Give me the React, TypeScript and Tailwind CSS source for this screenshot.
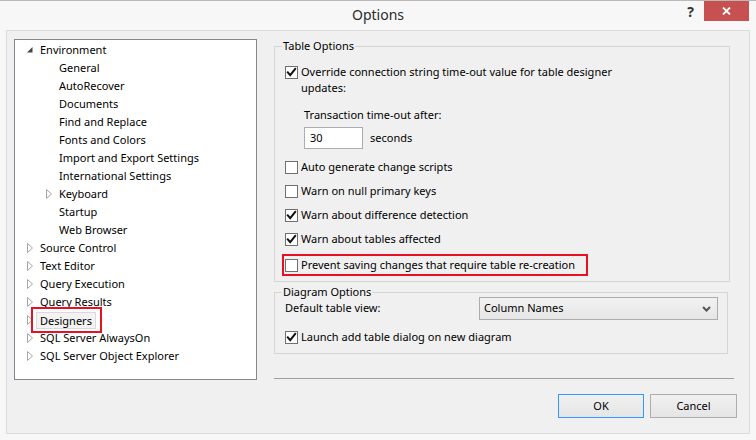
import React from "react";

function Check({ checked }: { checked: boolean }) {
  return (
    <span className="w-[13px] h-[13px] border border-[#707070] bg-white flex items-center justify-center shrink-0">
      {checked && (
        <svg width="11" height="11" viewBox="0 0 11 11">
          <path d="M1.8 5.4 L4.2 8.2 L9.2 2" stroke="#111" strokeWidth="2" fill="none" strokeLinecap="square" />
        </svg>
      )}
    </span>
  );
}

function CheckRow({ checked, label }: { checked: boolean; label: string }) {
  return (
    <div className="h-[24px] flex items-center gap-[3px]">
      <Check checked={checked} />
      <span>{label}</span>
    </div>
  );
}

function Collapsed() {
  return (
    <svg width="7" height="10" viewBox="0 0 7 10">
      <polygon points="0.5,0.5 5.5,5 0.5,9.5" fill="#fff" stroke="#a6a6a6" strokeWidth="1" />
    </svg>
  );
}

function Expanded() {
  return (
    <svg width="6" height="6" viewBox="0 0 6 6">
      <polygon points="5.5,0 5.5,5.5 0,5.5" fill="#454545" />
    </svg>
  );
}

type Item = { label: string; level: number; arrow: "none" | "exp" | "col"; selected?: boolean };

const items: Item[] = [
  { label: "Environment", level: 0, arrow: "exp" },
  { label: "General", level: 1, arrow: "none" },
  { label: "AutoRecover", level: 1, arrow: "none" },
  { label: "Documents", level: 1, arrow: "none" },
  { label: "Find and Replace", level: 1, arrow: "none" },
  { label: "Fonts and Colors", level: 1, arrow: "none" },
  { label: "Import and Export Settings", level: 1, arrow: "none" },
  { label: "International Settings", level: 1, arrow: "none" },
  { label: "Keyboard", level: 1, arrow: "col" },
  { label: "Startup", level: 1, arrow: "none" },
  { label: "Web Browser", level: 1, arrow: "none" },
  { label: "Source Control", level: 0, arrow: "col" },
  { label: "Text Editor", level: 0, arrow: "col" },
  { label: "Query Execution", level: 0, arrow: "col" },
  { label: "Query Results", level: 0, arrow: "col" },
  { label: "Designers", level: 0, arrow: "col", selected: true },
  { label: "SQL Server AlwaysOn", level: 0, arrow: "col" },
  { label: "SQL Server Object Explorer", level: 0, arrow: "col" },
];

export default function App() {
  return (
    <div className="w-[756px] h-[440px] bg-[#f7f7f7] border-t border-[#b9b9b9] text-[11px] text-black font-['Noto_Sans','DejaVu_Sans',sans-serif] overflow-hidden">
      {/* Title bar */}
      <div className="h-[29px] grid grid-cols-[1fr_auto_1fr]">
        <div />
        <div className="self-center text-[14px] text-[#2b2b2b] leading-[20px] -mt-[1px]">Options</div>
        <div className="flex justify-end items-start pr-[7px]">
          <div className="mt-[2px] mr-[10px] text-[14px] font-bold text-[#333] leading-[18px]">?</div>
          <div className="w-[45px] h-[20px] bg-[#c75050] flex items-center justify-center">
            <svg width="9" height="8" viewBox="0 0 9 8">
              <path d="M1 0.5 L8 7.5 M8 0.5 L1 7.5" stroke="#fff" strokeWidth="1.8" />
            </svg>
          </div>
        </div>
      </div>

      {/* Main panel */}
      <div className="mx-[6px] h-[404px] border border-[#dadada] bg-[#f0f0f0] flex pl-[7px] pt-[8px]">
        {/* Tree */}
        <div className="w-[243px] h-[341px] border border-[#828790] bg-white shrink-0 pt-[1px]">
          {items.map((it) => (
            <div
              key={it.label}
              className={`relative h-[18px] flex items-center ${it.level === 0 ? "pl-[12px]" : "pl-[31px]"}`}
            >
              <span className="w-[13px] flex items-center">
                {it.arrow === "exp" && <Expanded />}
                {it.arrow === "col" && <Collapsed />}
              </span>
              {it.selected ? (
                <>
                  <span className="-ml-[4px] px-[3px] h-[17px] leading-[15px] border border-[#dadada] bg-[#f3f3f3] whitespace-nowrap">
                    {it.label}
                  </span>
                  <span className="absolute left-[16px] -top-[4px] w-[71px] h-[26px] border-2 border-[#e81123]" />
                </>
              ) : (
                <span className="whitespace-nowrap">{it.label}</span>
              )}
            </div>
          ))}
        </div>

        {/* Right column */}
        <div className="ml-[17px] -mt-[1px] w-[463px] flex flex-col">
          <fieldset className="w-[456px] border border-[#d5d5d5]">
            <legend className="ml-[7px] px-[1px] leading-[16px]">Table Options</legend>
            <div className="pl-[10px] pb-[5px]">
              <div className="mt-[10px] flex items-start gap-[3px]">
                <span className="mt-[2px]">
                  <Check checked={true} />
                </span>
                <span className="leading-[16px]">
                  Override connection string time-out value for table designer
                  <br />
                  updates:
                </span>
              </div>
              <div className="mt-[11px] pl-[19px] leading-[16px]">Transaction time-out after:</div>
              <div className="mt-[4px] pl-[19px] flex items-center">
                <div className="w-[59px] h-[22px] border border-[#abadb3] bg-white pl-[5px] leading-[20px]">30</div>
                <span className="ml-[7px]">seconds</span>
              </div>
              <div className="mt-[6px]">
                <CheckRow checked={false} label="Auto generate change scripts" />
                <CheckRow checked={false} label="Warn on null primary keys" />
                <CheckRow checked={true} label="Warn about difference detection" />
                <CheckRow checked={true} label="Warn about tables affected" />
              </div>
              <div className="mt-[3px] -ml-[3px] pl-[1px] w-[306px] h-[22px] border-2 border-[#e81123] flex items-center gap-[3px] whitespace-nowrap">
                <Check checked={false} />
                <span>Prevent saving changes that require table re-creation</span>
              </div>
            </div>
          </fieldset>

          <fieldset className="mt-[2px] w-[454px] border border-[#d5d5d5]">
            <legend className="ml-[7px] px-[1px] leading-[16px]">Diagram Options</legend>
            <div className="pl-[10px] pb-[4px]">
              <div className="-mt-[3px] h-[23px] flex items-center">
                <span className="w-[194px]">Default table view:</span>
                <div className="w-[239px] h-[23px] border border-[#acacac] bg-gradient-to-b from-[#f2f2f2] to-[#e5e5e5] flex items-center justify-between pl-[4px] pr-[6px]">
                  <span>Column Names</span>
                  <svg width="9" height="6" viewBox="0 0 9 6">
                    <path d="M1 1 L4.5 4.5 L8 1" stroke="#555" strokeWidth="2" fill="none" />
                  </svg>
                </div>
              </div>
              <div className="mt-[5px]">
                <CheckRow checked={true} label="Launch add table dialog on new diagram" />
              </div>
            </div>
          </fieldset>

          <div className="mt-[24px] w-[460px] h-px bg-[#a0a0a0]" />

          <div className="mt-[15px] flex justify-end gap-[6px]">
            <button className="w-[86px] h-[24px] border border-[#3399ff] bg-gradient-to-b from-[#f0f0f0] to-[#e5e5e5] text-[11px]">
              OK
            </button>
            <button className="w-[87px] h-[24px] border border-[#adadad] bg-gradient-to-b from-[#f0f0f0] to-[#e5e5e5] text-[11px]">
              Cancel
            </button>
          </div>
        </div>
      </div>
    </div>
  );
}
